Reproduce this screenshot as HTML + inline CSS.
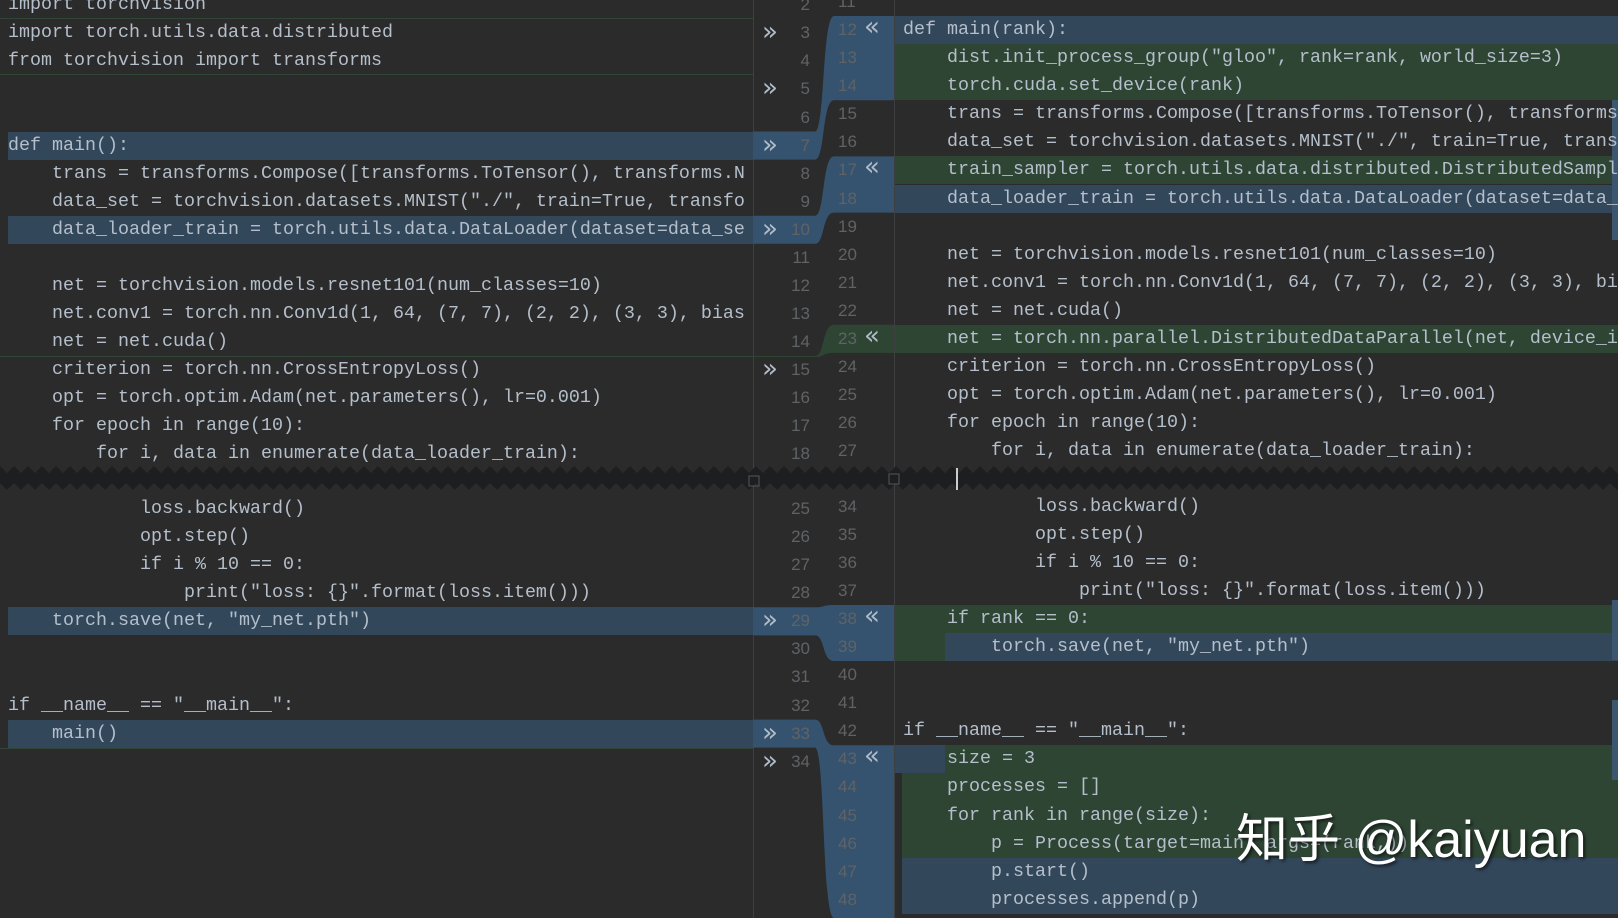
<!DOCTYPE html>
<html><head><meta charset="utf-8"><style>
*{margin:0;padding:0;box-sizing:border-box}
body{width:1618px;height:918px;background:#2b2b2b;overflow:hidden;position:relative;font-family:"Liberation Mono",monospace;font-size:18.33px;color:#b4bfcb}
.a{position:absolute}
.t{position:absolute;height:28px;line-height:28px;white-space:pre}
.n{position:absolute;height:28px;line-height:28px;color:#5f6366;font-size:17px;font-family:"Liberation Sans",sans-serif}
.bl{background:#33475b}
.gr{background:#2e4534}
.m{position:absolute;color:#b0bcc8;font-size:26px;font-family:"DejaVu Sans",sans-serif;line-height:28px;height:28px}
</style></head><body>
<div class="a bl" style="left:8px;top:131.5px;width:745px;height:28px"></div>
<div class="a bl" style="left:8px;top:215.8px;width:745px;height:28px"></div>
<div class="a bl" style="left:8px;top:607.3px;width:745px;height:28px"></div>
<div class="a bl" style="left:8px;top:719.6px;width:745px;height:28px"></div>
<div class="a" style="left:0;top:18px;width:753px;height:1px;background:#2f4536"></div>
<div class="a" style="left:0;top:74px;width:753px;height:1px;background:#2f4536"></div>
<div class="a" style="left:0;top:356px;width:753px;height:1px;background:#2f4536"></div>
<div class="a" style="left:0;top:748px;width:753px;height:1px;background:#2f4536"></div>

<div class="a bl" style="left:895px;top:16.1px;width:723px;height:28.1px"></div>
<div class="a gr" style="left:895px;top:44.1px;width:723px;height:56.2px"></div>
<div class="a gr" style="left:895px;top:156.4px;width:723px;height:28.1px"></div>
<div class="a bl" style="left:895px;top:184.5px;width:723px;height:28.1px"></div>
<div class="a gr" style="left:895px;top:324.8px;width:723px;height:28.1px"></div>
<div class="a gr" style="left:895px;top:605px;width:723px;height:28.1px"></div>
<div class="a gr" style="left:895px;top:633.1px;width:50px;height:28px"></div>
<div class="a bl" style="left:945px;top:633.1px;width:673px;height:28px"></div>
<div class="a bl" style="left:895px;top:745.3px;width:50px;height:28.1px"></div>
<div class="a gr" style="left:945px;top:745.3px;width:673px;height:28.1px"></div>
<div class="a gr" style="left:902px;top:773.4px;width:716px;height:84.2px"></div>
<div class="a bl" style="left:902px;top:857.6px;width:716px;height:56.2px"></div>

<svg class="a" style="left:0;top:0" width="1618" height="918">
<defs><pattern id="z" width="14" height="24" patternUnits="userSpaceOnUse" x="0" y="466">
<polygon points="0,0 7,7 14,0 14,17 7,24 0,17" fill="#1d1e1f"/></pattern></defs>
<line x1="753.5" y1="0" x2="753.5" y2="918" stroke="#3d3f41"/>
<line x1="894.5" y1="0" x2="894.5" y2="918" stroke="#3d3f41"/>
<g fill="#35536e">
<path d="M753 131.5 L815 131.5 C825 131.5 822 16 834 16 L894 16 L894 100.3 L834 100.3 C822 100.3 825 159.6 815 159.6 L753 159.6Z"/>
<path d="M753 215.8 L815 215.8 C825 215.8 822 156.4 834 156.4 L894 156.4 L894 212.6 L834 212.6 C822 212.6 825 243.8 815 243.8 L753 243.8Z"/>
<path d="M753 607.3 L815 607.3 C825 607.3 822 605 834 605 L894 605 L894 661 L834 661 C822 661 825 635.4 815 635.4 L753 635.4Z"/>
<path d="M753 719.6 L815 719.6 C825 719.6 822 745.3 834 745.3 L894 745.3 L894 918 L834 918 C822 918 825 747.6 815 747.6 L753 747.6Z"/>
</g>
<path d="M753 356 L815 356 C825 356 822 324.8 834 324.8 L894 324.8 L894 352.9 L834 352.9 C822 352.9 825 357 815 357 L753 357Z" fill="#2e4534"/>
<rect x="0" y="466" width="1618" height="24" fill="url(#z)"/>
<rect x="749" y="476" width="10" height="10" fill="none" stroke="#555"/>
<rect x="889" y="474" width="10" height="10" fill="none" stroke="#555"/>
<rect x="1612" y="100" width="6" height="140" fill="#3d5670"/>
<rect x="1612" y="600" width="6" height="60" fill="#3d5670"/>
<rect x="1612" y="700" width="6" height="80" fill="#3d5670"/>
</svg>
<div class="a" style="left:956px;top:468px;width:2px;height:22px;background:#ccc"></div>

<div class="m" style="left:762px;top:18.3px">»</div>
<div class="m" style="left:762px;top:74.4px">»</div>
<div class="m" style="left:762px;top:130.5px">»</div>
<div class="m" style="left:762px;top:214.8px">»</div>
<div class="m" style="left:762px;top:355.1px">»</div>
<div class="m" style="left:762px;top:606.3px">»</div>
<div class="m" style="left:762px;top:718.6px">»</div>
<div class="m" style="left:762px;top:746.6px">»</div>
<div class="m" style="left:864px;top:13.1px">«</div>
<div class="m" style="left:864px;top:153.4px">«</div>
<div class="m" style="left:864px;top:321.8px">«</div>
<div class="m" style="left:864px;top:602px">«</div>
<div class="m" style="left:864px;top:742.3px">«</div>

<div style="position:absolute;left:780px;top:0;width:30px;text-align:right">
<div class="n" style="right:0;top:-8.8px">2</div><div class="n" style="right:0;top:19.3px">3</div><div class="n" style="right:0;top:47.3px">4</div><div class="n" style="right:0;top:75.4px">5</div><div class="n" style="right:0;top:103.5px">6</div><div class="n" style="right:0;top:131.5px">7</div><div class="n" style="right:0;top:159.6px">8</div><div class="n" style="right:0;top:187.7px">9</div><div class="n" style="right:0;top:215.8px">10</div><div class="n" style="right:0;top:243.8px">11</div><div class="n" style="right:0;top:271.9px">12</div><div class="n" style="right:0;top:300px">13</div><div class="n" style="right:0;top:328px">14</div><div class="n" style="right:0;top:356.1px">15</div><div class="n" style="right:0;top:384.2px">16</div><div class="n" style="right:0;top:412.3px">17</div><div class="n" style="right:0;top:440.3px">18</div><div class="n" style="right:0;top:495px">25</div><div class="n" style="right:0;top:523.1px">26</div><div class="n" style="right:0;top:551.1px">27</div><div class="n" style="right:0;top:579.2px">28</div><div class="n" style="right:0;top:607.3px">29</div><div class="n" style="right:0;top:635.4px">30</div><div class="n" style="right:0;top:663.4px">31</div><div class="n" style="right:0;top:691.5px">32</div><div class="n" style="right:0;top:719.6px">33</div><div class="n" style="right:0;top:747.6px">34</div>
</div>
<div style="position:absolute;left:838px;top:0">
<div class="n" style="top:-12px">11</div><div class="n" style="top:16.1px">12</div><div class="n" style="top:44.1px">13</div><div class="n" style="top:72.2px">14</div><div class="n" style="top:100.3px">15</div><div class="n" style="top:128.4px">16</div><div class="n" style="top:156.4px">17</div><div class="n" style="top:184.5px">18</div><div class="n" style="top:212.6px">19</div><div class="n" style="top:240.6px">20</div><div class="n" style="top:268.7px">21</div><div class="n" style="top:296.8px">22</div><div class="n" style="top:324.8px">23</div><div class="n" style="top:352.9px">24</div><div class="n" style="top:381px">25</div><div class="n" style="top:409.1px">26</div><div class="n" style="top:437.1px">27</div><div class="n" style="top:492.7px">34</div><div class="n" style="top:520.8px">35</div><div class="n" style="top:548.8px">36</div><div class="n" style="top:576.9px">37</div><div class="n" style="top:605px">38</div><div class="n" style="top:633.1px">39</div><div class="n" style="top:661.1px">40</div><div class="n" style="top:689.2px">41</div><div class="n" style="top:717.3px">42</div><div class="n" style="top:745.3px">43</div><div class="n" style="top:773.4px">44</div><div class="n" style="top:801.5px">45</div><div class="n" style="top:829.6px">46</div><div class="n" style="top:857.6px">47</div><div class="n" style="top:885.7px">48</div>
</div>

<div class="a" style="left:8px;top:0;width:745px;height:918px;overflow:hidden">
<div class="t" style="top:-8.8px">import torchvision</div>
<div class="t" style="top:19.3px">import torch.utils.data.distributed</div>
<div class="t" style="top:47.3px">from torchvision import transforms</div>
<div class="t" style="top:131.5px">def main():</div>
<div class="t" style="top:159.6px">    trans = transforms.Compose([transforms.ToTensor(), transforms.N</div>
<div class="t" style="top:187.7px">    data_set = torchvision.datasets.MNIST("./", train=True, transfo</div>
<div class="t" style="top:215.8px">    data_loader_train = torch.utils.data.DataLoader(dataset=data_se</div>
<div class="t" style="top:271.9px">    net = torchvision.models.resnet101(num_classes=10)</div>
<div class="t" style="top:300px">    net.conv1 = torch.nn.Conv1d(1, 64, (7, 7), (2, 2), (3, 3), bias</div>
<div class="t" style="top:328px">    net = net.cuda()</div>
<div class="t" style="top:356.1px">    criterion = torch.nn.CrossEntropyLoss()</div>
<div class="t" style="top:384.2px">    opt = torch.optim.Adam(net.parameters(), lr=0.001)</div>
<div class="t" style="top:412.3px">    for epoch in range(10):</div>
<div class="t" style="top:440.3px">        for i, data in enumerate(data_loader_train):</div>
<div class="t" style="top:495px">            loss.backward()</div>
<div class="t" style="top:523.1px">            opt.step()</div>
<div class="t" style="top:551.1px">            if i % 10 == 0:</div>
<div class="t" style="top:579.2px">                print("loss: {}".format(loss.item()))</div>
<div class="t" style="top:607.3px">    torch.save(net, "my_net.pth")</div>
<div class="t" style="top:691.5px">if __name__ == "__main__":</div>
<div class="t" style="top:719.6px">    main()</div>
</div>

<div class="a" style="left:903px;top:0;width:715px;height:918px;overflow:hidden">
<div class="t" style="top:16.1px">def main(rank):</div>
<div class="t" style="top:44.1px">    dist.init_process_group("gloo", rank=rank, world_size=3)</div>
<div class="t" style="top:72.2px">    torch.cuda.set_device(rank)</div>
<div class="t" style="top:100.3px">    trans = transforms.Compose([transforms.ToTensor(), transforms.N</div>
<div class="t" style="top:128.4px">    data_set = torchvision.datasets.MNIST("./", train=True, transfo</div>
<div class="t" style="top:156.4px">    train_sampler = torch.utils.data.distributed.DistributedSampler</div>
<div class="t" style="top:184.5px">    data_loader_train = torch.utils.data.DataLoader(dataset=data_se</div>
<div class="t" style="top:240.6px">    net = torchvision.models.resnet101(num_classes=10)</div>
<div class="t" style="top:268.7px">    net.conv1 = torch.nn.Conv1d(1, 64, (7, 7), (2, 2), (3, 3), bias</div>
<div class="t" style="top:296.8px">    net = net.cuda()</div>
<div class="t" style="top:324.8px">    net = torch.nn.parallel.DistributedDataParallel(net, device_ids</div>
<div class="t" style="top:352.9px">    criterion = torch.nn.CrossEntropyLoss()</div>
<div class="t" style="top:381px">    opt = torch.optim.Adam(net.parameters(), lr=0.001)</div>
<div class="t" style="top:409.1px">    for epoch in range(10):</div>
<div class="t" style="top:437.1px">        for i, data in enumerate(data_loader_train):</div>
<div class="t" style="top:492.7px">            loss.backward()</div>
<div class="t" style="top:520.8px">            opt.step()</div>
<div class="t" style="top:548.8px">            if i % 10 == 0:</div>
<div class="t" style="top:576.9px">                print("loss: {}".format(loss.item()))</div>
<div class="t" style="top:605px">    if rank == 0:</div>
<div class="t" style="top:633.1px">        torch.save(net, "my_net.pth")</div>
<div class="t" style="top:717.3px">if __name__ == "__main__":</div>
<div class="t" style="top:745.3px">    size = 3</div>
<div class="t" style="top:773.4px">    processes = []</div>
<div class="t" style="top:801.5px">    for rank in range(size):</div>
<div class="t" style="top:829.6px">        p = Process(target=main, args=(rank,))</div>
<div class="t" style="top:857.6px">        p.start()</div>
<div class="t" style="top:885.7px">        processes.append(p)</div>
</div>

<div class="a" style="left:1236px;top:810px;font-family:'Liberation Sans','Noto Sans CJK SC',sans-serif;font-size:52px;line-height:60px;color:#fff;text-shadow:2px 2px 3px rgba(0,0,0,.6);white-space:nowrap">知乎 @kaiyuan</div>
</body></html>
